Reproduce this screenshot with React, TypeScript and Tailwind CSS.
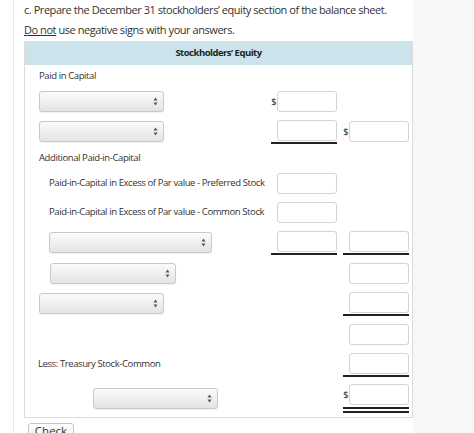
import React from 'react'

const font = "font-['Open_Sans','Liberation_Sans',sans-serif]"

function Arrows() {
  return (
    <svg width="5" height="9" viewBox="0 0 5 9" className="shrink-0">
      <path d="M2.5 0.5 L4.5 3.5 L0.5 3.5 Z" fill="#555" />
      <path d="M2.5 8.5 L4.5 5.5 L0.5 5.5 Z" fill="#555" />
    </svg>
  )
}

function Select({ className }: { className: string }) {
  return (
    <div className={`flex h-[21px] items-center justify-end rounded-[3px] border border-[#c9c9c9] bg-gradient-to-b from-[#fbfbfb] to-[#e4e4e4] pr-[5px] shadow-[0_1px_1px_rgba(0,0,0,0.06)] ${className}`}>
      <Arrows />
    </div>
  )
}

function Box() {
  return <input type="text" readOnly className="h-[21px] w-[60px] rounded-[3px] border border-[#d3d3d3] bg-white outline-none" />
}

// a money cell: optional $ sign, input, optional rule below
function Cell({ dollar, rule }: { dollar?: boolean; rule?: 'single' | 'double' }) {
  const ruleCls = rule === 'single' ? 'border-b-2 border-[#222] pb-[1px]' : rule === 'double' ? 'border-b-[6px] border-double border-[#222] pb-[2px]' : ''
  return (
    <div className={`flex w-[66px] items-end justify-end ${ruleCls}`}>
      {dollar && <span className="mr-[1px] self-center text-[9px] font-semibold text-[#444]">$</span>}
      <Box />
    </div>
  )
}

function Row({ h, children }: { h: string; children: React.ReactNode }) {
  return <div className={`grid grid-cols-[240px_66px_66px] items-center gap-x-[6px] ${h}`}>{children}</div>
}

export default function App() {
  return (
    <div className={`h-[433px] w-[474px] overflow-hidden bg-white ${font} text-[#333]`}>
      <div className="flex h-full">
        <div className="w-[13px] shrink-0" />
        <div className="w-[400px] shrink-0 border-l border-[#e8e8e8] pl-[10px]">
          <p className="whitespace-nowrap text-[11px] leading-[20px] tracking-[-0.45px]">c. Prepare the December 31 stockholders’ equity section of the balance sheet.</p>
          <p className="whitespace-nowrap text-[11px] leading-[20px] tracking-[-0.45px]"><span className="underline">Do not</span> use negative signs with your answers.</p>

          <div className="mt-[1px] w-[389px] border border-[#dcdcdc] text-[9.5px] tracking-[-0.4px]">
            <div className="flex h-[23px] items-center justify-center bg-[#cce3eb] text-[9.5px] font-bold tracking-[-0.5px] text-[#222]">Stockholders’ Equity</div>

            <div className="flex h-[22px] items-center pl-[14px]">Paid in Capital</div>

            <Row h="h-[29px]">
              <div className="pl-[14px]"><Select className="w-[125px]" /></div>
              <Cell dollar />
              <div />
            </Row>

            <Row h="h-[31px]">
              <div className="pl-[14px]"><Select className="w-[125px]" /></div>
              <Cell rule="single" />
              <Cell dollar />
            </Row>

            <div className="flex h-[22px] items-center pl-[14px]">Additional Paid-in-Capital</div>

            <Row h="h-[29px]">
              <div className="whitespace-nowrap pl-[24px]">Paid-in-Capital in Excess of Par value - Preferred Stock</div>
              <Cell />
              <div />
            </Row>

            <Row h="h-[29px]">
              <div className="whitespace-nowrap pl-[24px]">Paid-in-Capital in Excess of Par value - Common Stock</div>
              <Cell />
              <div />
            </Row>

            <Row h="h-[31px]">
              <div className="pl-[24px]"><Select className="w-[163px]" /></div>
              <Cell rule="single" />
              <Cell rule="single" />
            </Row>

            <Row h="h-[30px]">
              <div className="pl-[25px]"><Select className="w-[126px]" /></div>
              <div />
              <Cell />
            </Row>

            <Row h="h-[31px]">
              <div className="pl-[14px]"><Select className="w-[125px]" /></div>
              <div />
              <Cell rule="single" />
            </Row>

            <Row h="h-[30px]">
              <div />
              <div />
              <Cell />
            </Row>

            <Row h="h-[31px]">
              <div className="pl-[13px]">Less: Treasury Stock-Common</div>
              <div />
              <Cell rule="single" />
            </Row>

            <Row h="h-[37px]">
              <div className="pl-[68px]"><Select className="w-[125px]" /></div>
              <div />
              <Cell dollar rule="double" />
            </Row>
          </div>

          <button className="ml-[4px] mt-[5px] flex h-[24px] w-[46px] justify-center rounded-[3px] border border-[#c4c4c4] bg-gradient-to-b from-white to-[#ececec] pt-0 text-[11.5px] leading-[13px] text-[#333]">Check</button>
        </div>
        <div className="flex-1 bg-[#f7f7f7]" />
      </div>
    </div>
  )
}
